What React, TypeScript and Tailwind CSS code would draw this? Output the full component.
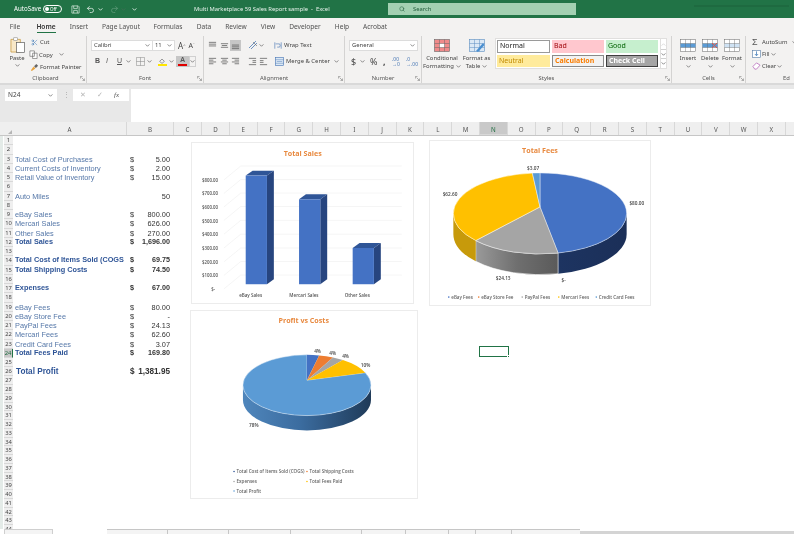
import { Scissors, Search, Undo2, Redo2 } from 'lucide-react'

const UI = "font-['Noto_Sans',sans-serif]"
const CELL = "font-['Liberation_Sans',sans-serif]"

type Row = { a?: string; d?: string; v?: string; kind?: 'bold' | 'big' | 'plain' }

const ROW_DATA: Record<number, Row> = {
  3: { a: 'Total Cost of Purchases', d: '$', v: '5.00' },
  4: { a: 'Current Costs of Inventory', d: '$', v: '2.00' },
  5: { a: 'Retail Value of Inventory', d: '$', v: '15.00' },
  7: { a: 'Auto Miles', v: '50', kind: 'plain' },
  9: { a: 'eBay Sales', d: '$', v: '800.00' },
  10: { a: 'Mercari Sales', d: '$', v: '626.00' },
  11: { a: 'Other Sales', d: '$', v: '270.00' },
  12: { a: 'Total Sales', d: '$', v: '1,696.00', kind: 'bold' },
  14: { a: 'Total Cost of Items Sold (COGS', d: '$', v: '69.75', kind: 'bold' },
  15: { a: 'Total Shipping Costs', d: '$', v: '74.50', kind: 'bold' },
  17: { a: 'Expenses', d: '$', v: '67.00', kind: 'bold' },
  19: { a: 'eBay Fees', d: '$', v: '80.00' },
  20: { a: 'eBay Store Fee', d: '$', v: '-' },
  21: { a: 'PayPal Fees', d: '$', v: '24.13' },
  22: { a: 'Mercari Fees', d: '$', v: '62.60' },
  23: { a: 'Credit Card Fees', d: '$', v: '3.07' },
  24: { a: 'Total Fees Paid', d: '$', v: '169.80', kind: 'bold' },
  26: { a: 'Total Profit', d: '$', v: '1,381.95', kind: 'big' },
}

const ROWS = Array.from({ length: 44 }, (_, i) => i + 1)
const COLS = 'DEFGHIJKLMNOPQRSTUVWX'.split('')

function Chev({ className = '' }: { className?: string }) {
  return (
    <svg viewBox="0 0 6 4" className={`w-[5px] h-[3px] shrink-0 ${className}`}>
      <path d="M0.5 0.5 L3 3 L5.5 0.5" fill="none" stroke="#666" strokeWidth="1" />
    </svg>
  )
}

function Launcher() {
  return (
    <svg viewBox="0 0 6 6" className="absolute right-[1px] bottom-[2px] w-[5px] h-[5px]">
      <path d="M0.5 3V0.5H3M5.5 3V5.5H3M2 2L5 5" fill="none" stroke="#777" strokeWidth="0.7" />
    </svg>
  )
}

function Lines({ rows, active }: { rows: number[][]; active?: boolean }) {
  return (
    <span className={`w-[11px] h-[11px] flex items-center justify-center ${active ? 'bg-[#c6c6c6]' : ''}`}>
      <svg viewBox="0 0 10 10" className="w-[9px] h-[9px]">
        {rows.map(([x1, x2, y]) => (
          <line key={`${x1}-${y}`} x1={x1} x2={x2} y1={y} y2={y} stroke="#555" strokeWidth="0.8" />
        ))}
      </svg>
    </span>
  )
}

function TableIcon({ fill, accent }: { fill: string; accent?: string }) {
  return (
    <svg viewBox="0 0 16 13" className="w-[16px] h-[13px]">
      <rect x="0.5" y="0.5" width="15" height="12" fill="#fff" stroke="#666" strokeWidth="0.5" />
      <rect x="0.5" y="4.5" width="15" height="4" fill={fill} />
      <path d="M0.5 4.5H15.5M0.5 8.5H15.5M5.5 0.5V12.5M10.5 0.5V12.5" stroke="#666" strokeWidth="0.4" />
      {accent && <path d="M10 4L15 9M15 4L10 9" stroke={accent} strokeWidth="1" />}
    </svg>
  )
}

function Group({ w, label, children, last }: { w: string; label: string; children: React.ReactNode; last?: boolean }) {
  return (
    <div className={`relative flex flex-col h-full shrink-0 ${w} ${last ? '' : 'border-r border-[#d4d3d2]'}`}>
      <div className="h-[37px] flex">{children}</div>
      <div className={`h-[10px] leading-[11px] text-[5.8px] text-[#555] whitespace-nowrap ${last ? 'pl-[37px]' : 'text-center'}`}>{label}</div>
      {!last && <Launcher />}
    </div>
  )
}

function TitleBar() {
  return (
    <div className={`${UI} h-[18px] bg-[#217346] text-white flex items-center text-[6.2px] relative`}>
      <span className="ml-[14px] w-[29px]">AutoSave</span>
      <span className="w-[19px] h-[8px] rounded-full border border-white flex items-center pl-[1px] gap-[1px] text-[4.5px] leading-none">
        <span className="w-[4px] h-[4px] rounded-full bg-white" />
        Off
      </span>
      <svg viewBox="0 0 10 10" className="ml-[9px] w-[9px] h-[9px]">
        <path d="M1 1H8L9 2V9H1Z M3 1V4H7V1 M3 9V6H7V9" fill="none" stroke="#dcebe2" strokeWidth="0.8" />
      </svg>
      <Undo2 className="ml-[6px] w-[9px] h-[9px] text-[#e6f0ea]" strokeWidth={2} />
      <Chev className="ml-[3px] brightness-[3]" />
      <Redo2 className="ml-[7px] w-[9px] h-[9px] text-[#5f9a79]" strokeWidth={2} />
      <Chev className="ml-[2px] opacity-50" />
      <Chev className="ml-[6px] brightness-[3]" />
      <span className="ml-[57px] w-[140px] text-[5.8px] text-[#e9f3ed] whitespace-pre">Multi Marketplace 59 Sales Report sample  -  Excel</span>
      <div className="ml-[54px] w-[188px] h-[12px] bg-[#a3d0b2] flex items-center pl-[11px] text-[#1f5a38]">
        <Search className="w-[6px] h-[6px]" strokeWidth={2} />
        <span className="ml-[8px] text-[5.8px]">Search</span>
      </div>
      <div className="ml-[118px] w-[95px] h-[2px] -mt-[6px] bg-[#1e6a40]" />
    </div>
  )
}

function Tabs() {
  const tabs: [string, string][] = [
    ['File', 'w-[30px]'], ['Home', 'w-[32px]'], ['Insert', 'w-[34px]'], ['Page Layout', 'w-[50px]'],
    ['Formulas', 'w-[44px]'], ['Data', 'w-[28px]'], ['Review', 'w-[36px]'], ['View', 'w-[28px]'],
    ['Developer', 'w-[46px]'], ['Help', 'w-[28px]'], ['Acrobat', 'w-[38px]'],
  ]
  return (
    <div className={`${UI} h-[18px] flex text-[6.6px] text-[#505050] bg-[#f3f2f1]`}>
      {tabs.map(([t, w]) => (
        <div key={t} className={`${w} text-center leading-[17px] relative ${t === 'Home' ? 'font-semibold text-[#333]' : ''}`}>
          {t}
          {t === 'Home' && <span className="absolute left-[7px] right-[6px] top-[14px] h-[1px] bg-[#217346]" />}
        </div>
      ))}
    </div>
  )
}

function Ribbon() {
  return (
    <div className={`${UI} h-[49px] bg-[#f3f2f1] flex pl-[5px] text-[5.9px] text-[#444] border-b-[2px] border-[#d9d9d9]`}>
      <Group w="w-[82px]" label="Clipboard">
        <div className="w-[24px] flex flex-col items-center pt-[1px]">
          <svg viewBox="0 0 16 17" className="w-[15px] h-[16px]">
            <path d="M1 2.5H11V16H1Z" fill="#f8e8c8" stroke="#c99a3c" strokeWidth="0.8" />
            <rect x="4" y="0.8" width="4" height="3" fill="#fff" stroke="#888" strokeWidth="0.6" />
            <rect x="7" y="6" width="8.5" height="10.5" fill="#fff" stroke="#555" strokeWidth="0.7" />
          </svg>
          <span className="leading-[8px] mt-[1px]">Paste</span>
          <Chev className="mt-[2px]" />
        </div>
        <div className="flex flex-col leading-[12.5px]">
          <div className="flex items-center h-[12.5px] gap-[2px] pl-[2px]">
            <Scissors className="w-[7px] h-[7px] text-[#2b6cb0]" strokeWidth={1.5} />
            <span>Cut</span>
          </div>
          <div className="flex items-center h-[12.5px] gap-[1px]">
            <svg viewBox="0 0 10 10" className="w-[9px] h-[9px]">
              <path d="M1 1H6V7H1ZM4 3.5H9V9.5H4Z" fill="#fff" stroke="#666" strokeWidth="0.7" />
            </svg>
            <span>Copy</span>
            <Chev className="ml-[5px]" />
          </div>
          <div className="flex items-center h-[12.5px] gap-[1px] pl-[1px]">
            <svg viewBox="0 0 10 10" className="w-[9px] h-[9px]">
              <path d="M1 8L4 4L6 6L2 9Z" fill="#e8a33d" />
              <path d="M4.5 3.5L7 1L9 3L6.5 5.5Z" fill="#666" />
            </svg>
            <span>Format Painter</span>
          </div>
        </div>
      </Group>

      <Group w="w-[117px]" label="Font">
        <div className="flex flex-col pl-[4px] pt-[4px]">
          <div className="flex items-center h-[11px]">
            <div className="w-[62px] h-[11px] bg-white border border-[#dcdcdc] flex items-center justify-between px-[2px]">
              <span>Calibri</span><Chev />
            </div>
            <div className="w-[22px] h-[11px] bg-white border border-[#dcdcdc] border-l-0 flex items-center justify-between px-[2px]">
              <span>11</span><Chev />
            </div>
            <span className="ml-[3px] text-[8px] leading-none">A<sup className="text-[4px]">^</sup></span>
            <span className="ml-[3px] text-[7px] leading-none">A<sup className="text-[4px]">ˇ</sup></span>
          </div>
          <div className="flex items-center h-[11px] mt-[5px] text-[#555]">
            <b className={`${CELL} ml-[4px] w-[11px] text-[7px]`}>B</b>
            <i className={`${CELL} w-[11px] text-[7px]`}>I</i>
            <u className={`${CELL} w-[9px] text-[7px]`}>U</u>
            <Chev />
            <svg viewBox="0 0 10 10" className="ml-[5px] w-[9px] h-[9px]">
              <path d="M0.5 0.5H9.5V9.5H0.5ZM5 0.5V9.5M0.5 5H9.5" fill="none" stroke="#888" strokeWidth="0.6" />
            </svg>
            <Chev className="ml-[2px]" />
            <span className="ml-[5px] w-[10px] flex flex-col items-center">
              <svg viewBox="0 0 10 7" className="w-[8px] h-[6px]">
                <path d="M2 4L5 1L8 4L5 6.5Z" fill="none" stroke="#666" strokeWidth="0.8" />
              </svg>
              <span className="w-[9px] h-[2px] bg-[#ffe600]" />
            </span>
            <Chev className="ml-[2px]" />
            <span className="ml-[2px] w-[13px] h-[11px] bg-[#c6c6c6] flex flex-col items-center">
              <span className="text-[7px] leading-[8px] font-semibold">A</span>
              <span className="w-[9px] h-[2px] bg-[#e00000]" />
            </span>
            <span className="w-[7px] h-[11px] border border-[#d0d0d0] flex items-center justify-center"><Chev /></span>
          </div>
        </div>
      </Group>

      <Group w="w-[141px]" label="Alignment">
        <div className="flex flex-col pl-[3px] pt-[3px]">
          <div className="flex items-center h-[12px]">
            <Lines rows={[[1, 9, 1.5], [1, 9, 3.5], [1, 9, 5.5]]} />
            <span className="w-[1px]" />
            <Lines rows={[[1, 9, 3], [2, 8, 5], [1, 9, 7]]} />
            <Lines active rows={[[1, 9, 4.5], [1, 9, 6.5], [1, 9, 8.5]]} />
            <svg viewBox="0 0 10 10" className="ml-[7px] w-[10px] h-[10px]">
              <path d="M1 8L8 1M3 9L9 3" stroke="#4a78b5" strokeWidth="0.8" />
              <path d="M5 2L9 6" stroke="#666" strokeWidth="0.6" />
            </svg>
            <Chev className="ml-[1px]" />
            <svg viewBox="0 0 10 10" className="ml-[10px] w-[8px] h-[9px]">
              <path d="M1 1V9M9 1V9M2 3H7Q8.5 5 7 7H4" fill="none" stroke="#4a78b5" strokeWidth="0.8" />
            </svg>
            <span className="ml-[2px]">Wrap Text</span>
          </div>
          <div className="flex items-center h-[12px] mt-[4px]">
            <Lines rows={[[1, 9, 1.5], [1, 6, 3.5], [1, 9, 5.5], [1, 6, 7.5]]} />
            <span className="w-[1px]" />
            <Lines rows={[[1, 9, 1.5], [2.5, 7.5, 3.5], [1, 9, 5.5], [2.5, 7.5, 7.5]]} />
            <Lines rows={[[1, 9, 1.5], [4, 9, 3.5], [1, 9, 5.5], [4, 9, 7.5]]} />
            <span className="w-[6px]" />
            <Lines rows={[[1, 9, 1.5], [5, 9, 4], [5, 9, 6], [1, 9, 8.5]]} />
            <Lines rows={[[1, 9, 1.5], [1, 5, 4], [1, 5, 6], [1, 9, 8.5]]} />
            <svg viewBox="0 0 10 10" className="ml-[6px] w-[9px] h-[9px]">
              <rect x="0.5" y="0.5" width="9" height="9" fill="#dbe8f5" stroke="#4a78b5" strokeWidth="0.7" />
              <path d="M2 5H8M0.5 3H9.5M0.5 7H9.5" stroke="#4a78b5" strokeWidth="0.5" />
            </svg>
            <span className="ml-[2px]">Merge &amp; Center</span>
            <Chev className="ml-[4px]" />
          </div>
        </div>
      </Group>

      <Group w="w-[77px]" label="Number">
        <div className="flex flex-col pl-[4px] pt-[4px]">
          <div className="w-[69px] h-[11px] bg-white border border-[#dcdcdc] flex items-center justify-between px-[2px]">
            <span>General</span><Chev />
          </div>
          <div className="flex items-center h-[11px] mt-[5px] text-[9px] leading-none pl-[2px]">
            <span className="w-[8px]">$</span>
            <Chev className="ml-[1px]" />
            <span className="ml-[5px] w-[10px]">%</span>
            <b className="ml-[3px] w-[6px]">,</b>
            <span className="ml-[3px] text-[5px] text-[#4a78b5] w-[11px] leading-[5px]">.00<br />→0</span>
            <span className="ml-[3px] text-[5px] text-[#4a78b5] w-[11px] leading-[5px]">.0<br />→.00</span>
          </div>
        </div>
      </Group>

      <Group w="w-[250px]" label="Styles">
        <div className="w-[72px] flex pl-[2px]">
          <div className="w-[36px] flex flex-col items-center pt-[3px]">
            <svg viewBox="0 0 16 13" className="w-[16px] h-[13px]">
              <rect x="0.5" y="0.5" width="15" height="12" fill="#f08a8a" stroke="#666" strokeWidth="0.6" />
              <rect x="5.5" y="4.5" width="5" height="4" fill="#fff" />
              <path d="M0.5 4.5H15.5M0.5 8.5H15.5M5.5 0.5V12.5M10.5 0.5V12.5" stroke="#666" strokeWidth="0.5" />
            </svg>
            <span className="mt-[2px] leading-[8px] whitespace-nowrap">Conditional</span>
            <span className="leading-[8px] whitespace-nowrap flex items-center gap-[2px]">Formatting <Chev /></span>
          </div>
          <div className="w-[33px] flex flex-col items-center pt-[3px]">
            <svg viewBox="0 0 16 13" className="w-[16px] h-[13px]">
              <rect x="0.5" y="0.5" width="15" height="12" fill="#dbe8f5" stroke="#5b8dc0" strokeWidth="0.6" />
              <path d="M0.5 4.5H15.5M0.5 8.5H15.5M5.5 0.5V12.5M10.5 0.5V12.5" stroke="#5b8dc0" strokeWidth="0.5" />
              <path d="M7 12L14 4L15.5 6L9 13Z" fill="#4a8fd0" />
            </svg>
            <span className="mt-[2px] leading-[8px] whitespace-nowrap">Format as</span>
            <span className="leading-[8px] whitespace-nowrap flex items-center gap-[2px]">Table <Chev /></span>
          </div>
        </div>
        <div className="ml-[1px] mt-[2px] h-[31px] w-[172px] bg-white border border-[#e0dfde] flex text-[7px]">
          <div className="grid grid-cols-[55px_54px_54px] grid-rows-2 gap-y-[2px] p-[1px] w-[164px]">
            <div className="mr-[2px] bg-white border-[1.5px] border-[#9a9a9a] leading-[9px] pl-[2px] text-[#222]">Normal</div>
            <div className="mr-[2px] bg-[#ffc7ce] text-[#9c0006] leading-[12px] pl-[2px]">Bad</div>
            <div className="mr-[2px] bg-[#c6efce] text-[#006100] leading-[12px] pl-[2px]">Good</div>
            <div className="mr-[2px] bg-[#ffeb9c] text-[#c08a00] leading-[12px] pl-[2px]">Neutral</div>
            <div className="mr-[2px] bg-[#f2f2f2] border border-[#8a8a8a] text-[#fa7d00] font-bold leading-[10px] pl-[2px]">Calculation</div>
            <div className="mr-[2px] bg-[#a5a5a5] border-[1.5px] border-[#3f3f3f] text-white font-bold leading-[9px] pl-[2px]">Check Cell</div>
          </div>
          <div className="w-[8px] flex flex-col border-l border-[#e0dfde] items-center">
            <div className="h-[10px] flex items-center"><Chev className="rotate-180 opacity-30" /></div>
            <div className="h-[10px] w-full flex items-center justify-center border-y border-[#d0d0d0]"><Chev /></div>
            <div className="h-[9px] flex items-center"><Chev /></div>
          </div>
        </div>
      </Group>

      <Group w="w-[74px]" label="Cells">
        {[
          { t: 'Insert', icon: <TableIcon fill="#5b9bd5" /> },
          { t: 'Delete', icon: <TableIcon fill="#5b9bd5" accent="#e2574c" /> },
          { t: 'Format', icon: <TableIcon fill="#cfe2f3" /> },
        ].map(({ t, icon }, i) => (
          <div key={t} className={`w-[22px] flex flex-col items-center pt-[3px] ${i === 0 ? 'ml-[5px]' : ''}`}>
            {icon}
            <span className="mt-[2px] leading-[8px]">{t}</span>
            <Chev className="mt-[3px]" />
          </div>
        ))}
      </Group>

      <Group w="w-[48px]" label="Ed" last>
        <div className="flex flex-col pl-[6px] whitespace-nowrap">
          <div className="flex items-center h-[12px] gap-[2px]">
            <span className={`${CELL} w-[8px] text-[9px] leading-none text-[#555]`}>Σ</span>
            <span>AutoSum</span>
            <Chev className="ml-[3px]" />
          </div>
          <div className="flex items-center h-[12px] gap-[1px]">
            <svg viewBox="0 0 10 9" className="w-[9px] h-[8px]">
              <rect x="0.5" y="0.5" width="9" height="8" fill="#fff" stroke="#5b7fa8" strokeWidth="0.7" />
              <path d="M5 1.5V6M3.2 4.5L5 6.5L6.8 4.5" fill="none" stroke="#2b6cb0" strokeWidth="0.8" />
            </svg>
            <span>Fill</span><Chev />
          </div>
          <div className="flex items-center h-[12px] gap-[1px]">
            <svg viewBox="0 0 10 9" className="w-[9px] h-[8px]">
              <path d="M1 5L5 1L9 3.5L5 8H3Z" fill="#fff" stroke="#b15bb5" strokeWidth="0.8" />
            </svg>
            <span>Clear</span><Chev />
          </div>
        </div>
      </Group>
    </div>
  )
}

function FormulaBar() {
  return (
    <div className={`${UI} h-[37px] bg-[#e8e8e8] flex pt-[4px] pl-[5px] text-[6.5px] text-[#444]`}>
      <div className="w-[52px] h-[12px] bg-white flex items-center justify-between pl-[3px] pr-[4px]">
        N24 <Chev />
      </div>
      <span className="ml-[6px] w-[10px] text-[#aaa] leading-[12px]">⋮</span>
      <div className="w-[56px] h-[12px] bg-white flex items-center text-[7px] text-[#b5b5b5] pl-[7px] gap-[11px]">
        <span>✕</span><span>✓</span><i className="text-[#555] font-['Liberation_Serif',serif]">fx</i>
      </div>
      <div className="ml-[2px] flex-1 h-[33px] bg-white" />
    </div>
  )
}

function ColHeaders() {
  return (
    <div className={`${UI} h-[14px] bg-[#efefef] flex text-[6.2px] text-[#555] border-b border-[#c6c6c6] pl-[4px] leading-[16px]`}>
      <div className="w-[9px] relative">
        <span className="absolute right-[1px] bottom-[1px] border-b-[4px] border-l-[4px] border-b-[#b5b5b5] border-l-transparent" />
      </div>
      <div className="w-[114px] text-center border-r border-[#d8d8d8]">A</div>
      <div className="w-[47px] text-center border-r border-[#d8d8d8]">B</div>
      <div className="w-[28px] text-center border-r border-[#d8d8d8]">C</div>
      {COLS.map(c => (
        <div key={c} className={`w-[27.8px] shrink-0 text-center border-r border-[#d8d8d8] ${c === 'N' ? 'bg-[#c9c9c9] text-[#1d6a3e] border-b border-[#217346]' : ''}`}>
          {c}
        </div>
      ))}
    </div>
  )
}

function SheetRow({ n }: { n: number }) {
  const r = ROW_DATA[n] ?? {}
  const h = n === 26 ? 'h-[9px]' : n > 26 ? 'h-[8.75px]' : 'h-[9.25px]'
  const bold = r.kind === 'bold'
  const big = r.kind === 'big'
  return (
    <div className={`${h} flex items-center`}>
      <div className={`${UI} w-[9px] h-full ml-[4px] shrink-0 text-[5.8px] leading-[9px] text-center border-b border-[#d8d8d8] ${n === 24 ? 'bg-[#c9c9c9] text-[#1d6a3e] border-r border-r-[#217346]' : 'bg-[#efefef] text-[#444]'}`}>
        {n}
      </div>
      <div className={`${CELL} w-[114px] shrink-0 whitespace-nowrap overflow-hidden pl-[2px] ${big ? 'text-[8.2px] font-bold text-[#2f5597] pl-[3px]' : bold ? 'text-[7.3px] font-bold text-[#2f5597]' : 'text-[7.35px] text-[#5577a8]'}`}>
        {r.a}
      </div>
      <div className={`${CELL} w-[46px] shrink-0 flex justify-between pl-[3px] pr-[3px] text-[#333] ${big ? 'text-[8.2px] font-bold text-[#2f4a80]' : bold ? 'text-[7.2px] font-bold' : 'text-[7.35px]'} ${r.kind === 'plain' ? 'pr-[1px]' : ''}`}>
        <span>{r.d}</span>
        <span>{r.v}</span>
      </div>
    </div>
  )
}

const chartText = "font-['Open_Sans',sans-serif]"

function BarChart() {
  const grid = [165.3, 179, 192.7, 206.3, 220.3, 234.3, 248.3, 262, 275.7]
  const labels = ['$800.00', '$700.00', '$600.00', '$500.00', '$400.00', '$300.00', '$200.00', '$100.00']
  const bars = [
    { x: 245, top: 175 },
    { x: 299, top: 199 },
    { x: 353.3, top: 248.3 },
  ]
  return (
    <div className="absolute left-[191px] top-[142px] w-[223px] h-[162px] bg-white border border-[#ececec]">
      <svg viewBox="191 142 223 162" className={`w-full h-full ${chartText}`}>
        <text x="302.7" y="155" textAnchor="middle" fontSize="7.2" fontWeight="700" fill="#e8893f">Total Sales</text>
        {grid.map(y => (
          <g key={y} stroke="#eeeeee" strokeWidth="0.6">
            <line x1="240" x2="403" y1={y} y2={y} />
            <line x1="223" x2="240" y1={y + 14} y2={y} />
          </g>
        ))}
        {bars.map(b => (
          <g key={b.x}>
            <path d={`M${b.x} ${b.top}L${b.x + 7} ${b.top - 5}H${b.x + 28.5}L${b.x + 21.5} ${b.top}Z`} fill="#2f5597" />
            <path d={`M${b.x + 21.5} ${b.top}L${b.x + 28.5} ${b.top - 5}V280L${b.x + 21.5} 285Z`} fill="#27457f" />
            <rect x={b.x} y={b.top} width="21.5" height={285 - b.top} fill="#4472c4" />
          </g>
        ))}
        {labels.map((l, i) => (
          <text key={l} x="217" y={181 + i * 13.85} textAnchor="end" fontSize="4.4" fontWeight="600" fill="#555">{l}</text>
        ))}
        <text x="214" y="291.5" textAnchor="end" fontSize="4.4" fontWeight="600" fill="#555">$-</text>
        <text x="250" y="298" textAnchor="middle" fontSize="4.6" fontWeight="600" fill="#555">eBay Sales</text>
        <text x="304" y="298" textAnchor="middle" fontSize="4.6" fontWeight="600" fill="#555">Mercari Sales</text>
        <text x="358" y="298" textAnchor="middle" fontSize="4.6" fontWeight="600" fill="#555">Other Sales</text>
      </svg>
    </div>
  )
}

function FeesPie() {
  const arc = 'A87.7 41 0 0'
  const legend: [number, string, string][] = [
    [447.7, 'eBay Fees', '#4472c4'],
    [478, 'eBay Store Fee', '#ed7d31'],
    [522, 'PayPal Fees', '#a5a5a5'],
    [559, 'Mercari Fees', '#ffc000'],
    [597, 'Credit Card Fees', '#5b9bd5'],
  ]
  return (
    <div className="absolute left-[429px] top-[140px] w-[222px] h-[166px] bg-white border border-[#ececec]">
      <svg viewBox="429 140 222 166" className={`w-full h-full ${chartText}`}>
        <defs>
          <linearGradient id="feeBlue" x1="0" x2="1">
            <stop offset="0" stopColor="#1d3461" /><stop offset="1" stopColor="#1b2f58" />
          </linearGradient>
          <linearGradient id="feeGray" x1="0" x2="1">
            <stop offset="0" stopColor="#9a9a9a" /><stop offset="0.5" stopColor="#6f6f6f" /><stop offset="1" stopColor="#5a5a5a" />
          </linearGradient>
        </defs>
        <text x="540" y="152.5" textAnchor="middle" fontSize="7.2" fontWeight="700" fill="#e8893f">Total Fees</text>
        <path d={`M627.7 213.3${arc} 1 558.3 253.4V274.4${arc} 0 627.7 234.3Z`} fill="url(#feeBlue)" />
        <path d={`M558.3 253.4${arc} 1 475 240.8V261.8${arc} 0 558.3 274.4Z`} fill="url(#feeGray)" stroke="#fff" strokeWidth="0.6" />
        <path d={`M475 240.8${arc} 1 452.3 213.3V234.3${arc} 0 475 261.8Z`} fill="#c79a0b" />
        <path d={`M540 206.7L540 172.3${arc} 1 627.7 213.3${arc} 1 558.3 253.4Z`} fill="#4472c4" stroke="#e8eef7" strokeWidth="0.5" />
        <path d={`M540 206.7L558.3 253.4${arc} 1 475 240.8Z`} fill="#a5a5a5" stroke="#e8e8e8" strokeWidth="0.5" />
        <path d={`M540 206.7L475 240.8${arc} 1 452.3 213.3${arc} 1 532.3 172.5Z`} fill="#ffc000" stroke="#fff" strokeWidth="0.5" />
        <path d={`M540 206.7L532.3 172.5${arc} 1 540 172.3Z`} fill="#5b9bd5" stroke="#fff" strokeWidth="0.4" />
        <g fontSize="4.8" fontWeight="600" fill="#444" textAnchor="middle">
          <text x="638" y="204.5">$80.00</text>
          <text x="449" y="196">$62.60</text>
          <text x="533" y="169.5">$3.07</text>
          <text x="502.7" y="281">$24.13</text>
          <text x="564" y="282.5">$-</text>
        </g>
        {legend.map(([x, t, c]) => (
          <g key={t}>
            <circle cx={x} cy="298" r="0.8" fill={c} />
            <text x={x + 2.5} y="299.8" fontSize="4.6" fontWeight="600" fill="#666">{t}</text>
          </g>
        ))}
      </svg>
    </div>
  )
}

function ProfitPie() {
  const arc = 'A64.7 30.7 0 0'
  const legend: [number, number, string, string][] = [
    [233.3, 472.3, 'Total Cost of Items Sold (COGS)', '#2f5597'],
    [307, 472.3, 'Total Shipping Costs', '#ed7d31'],
    [233.3, 482.3, 'Expenses', '#a5a5a5'],
    [307, 482.3, 'Total Fees Paid', '#ffc000'],
    [233.3, 492, 'Total Profit', '#5b9bd5'],
  ]
  return (
    <div className="absolute left-[190px] top-[310px] w-[228px] h-[189px] bg-white border border-[#ececec]">
      <svg viewBox="190 310 228 189" className={`w-full h-full ${chartText}`}>
        <defs>
          <linearGradient id="profitSide" x1="0" x2="1">
            <stop offset="0" stopColor="#4f86bc" /><stop offset="0.45" stopColor="#3b6c9f" /><stop offset="1" stopColor="#1f3a58" />
          </linearGradient>
        </defs>
        <text x="303.7" y="322.5" textAnchor="middle" fontSize="7.2" fontWeight="700" fill="#e8893f">Profit vs Costs</text>
        <path d={`M371.7 385${arc} 1 307 415.7${arc} 1 242.3 385V400${arc} 0 307 430.7${arc} 0 371.7 400Z`} fill="url(#profitSide)" />
        <path d={`M307 380L366 372.4${arc} 1 371.7 385${arc} 1 307 415.7${arc} 1 242.3 385${arc} 1 307 354.3Z`} fill="#5b9bd5" stroke="#dce9f5" strokeWidth="0.5" />
        <path d={`M307 380L307 354.3${arc} 1 319.3 354.9Z`} fill="#4472c4" />
        <path d={`M307 380L319.3 354.9${arc} 1 333.3 357Z`} fill="#ed7d31" />
        <path d={`M307 380L333.3 357${arc} 1 343.3 359.6Z`} fill="#a5a5a5" />
        <path d={`M307 380L343.3 359.6${arc} 1 366 372.4Z`} fill="#ffc000" />
        <g fontSize="4.8" fontWeight="600" fill="#444" textAnchor="middle">
          <text x="317.7" y="352">4%</text>
          <text x="333" y="354">4%</text>
          <text x="346" y="357.8">4%</text>
          <text x="366.3" y="367">10%</text>
          <text x="253.3" y="426.8">78%</text>
        </g>
        {legend.map(([x, y, t, c]) => (
          <g key={t}>
            <circle cx={x} cy={y} r="0.8" fill={c} />
            <text x={x + 2.5} y={y + 1.8} fontSize="4.6" fontWeight="600" fill="#666">{t}</text>
          </g>
        ))}
      </svg>
    </div>
  )
}

function SheetTabs() {
  const cuts = ['w-[61px]', 'w-[61px]', 'w-[62px]', 'w-[71px]', 'w-[44px]', 'w-[43px]', 'w-[27px]', 'w-[36px]']
  return (
    <div className="absolute left-0 right-0 top-[393px] h-[5px] bg-white flex pl-[4px]">
      <div className="w-[49px] border border-b-0 border-[#cfcfcf] bg-[#f4f4f4]" />
      <div className="w-[54px]" />
      {cuts.map((w, i) => (
        <div key={i} className={`${w} border-t border-r border-[#c6c6c6] bg-[#f4f4f4]`} />
      ))}
      <div className="w-[68px] border-t border-[#c6c6c6] bg-[#f4f4f4]" />
      <div className="flex-1 mt-[2px] bg-[#d4d4d4]" />
    </div>
  )
}

export default function App() {
  return (
    <div className="w-[794px] h-[534px] overflow-hidden bg-white blur-[0.25px]">
      <TitleBar />
      <Tabs />
      <Ribbon />
      <FormulaBar />
      <ColHeaders />
      <div className="relative h-[398px] overflow-hidden">
        {ROWS.map(n => <SheetRow key={n} n={n} />)}
        <div className="absolute left-0 top-0 w-[3px] h-full bg-[#e4ebe8]" />
        <div className="absolute inset-0 -top-[136px]">
          <BarChart />
          <FeesPie />
          <ProfitPie />
          <div className="absolute left-[479px] top-[346px] w-[30px] h-[11px] border border-[#217346]">
            <span className="absolute -right-[2px] -bottom-[2px] w-[3px] h-[3px] bg-[#217346] border border-white" />
          </div>
        </div>
        <SheetTabs />
      </div>
    </div>
  )
}
